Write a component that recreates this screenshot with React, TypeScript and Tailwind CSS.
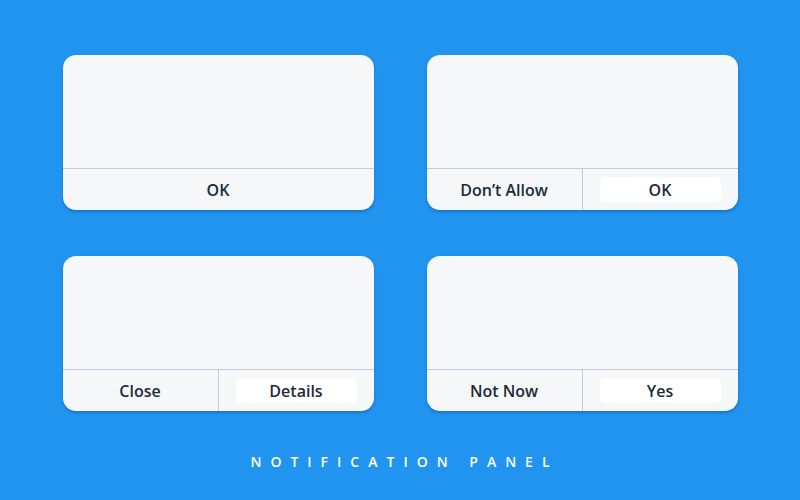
import React from 'react';

type Dialog = {
  buttons: string[];
};

const dialogs: Dialog[] = [
  { buttons: ['OK'] },
  { buttons: ["Don’t Allow", 'OK'] },
  { buttons: ['Close', 'Details'] },
  { buttons: ['Not Now', 'Yes'] },
];

const DialogCard = ({ buttons }: Dialog) => {
  return (
    <div className="w-[311px] h-[155px] bg-[#f5f7f9] rounded-[13px] shadow-[0_2px_3px_rgba(10,60,120,0.35)] flex flex-col overflow-hidden">
      <div className="h-[114px] border-b border-[#c4cbd4]"></div>
      <div className="flex-1 flex">
        {buttons.map((label, index) => {
          const primary = buttons.length > 1 && index === buttons.length - 1;
          return (
            <div
              key={label}
              className={`flex-1 flex items-center justify-center ${
                index > 0 ? 'border-l border-[#c4cbd4]' : ''
              }`}
            >
              {primary ? (
                <div className="w-[121px] h-[25px] bg-white rounded-[5px] flex items-center justify-center text-[16px] font-semibold text-[#1c2b38]">
                  {label}
                </div>
              ) : (
                <span className="text-[16px] font-semibold text-[#1c2b38]">{label}</span>
              )}
            </div>
          );
        })}
      </div>
    </div>
  );
};

const App = () => {
  return (
    <div
      className="w-[800px] h-[500px] bg-[#2194f0] flex flex-col items-center pt-[55px]"
      style={{ fontFamily: '"Open Sans", "Noto Sans", sans-serif' }}
    >
      <div className="grid grid-cols-[311px_311px] gap-x-[53px] gap-y-[46px]">
        {dialogs.map((dialog, index) => (
          <DialogCard key={index} buttons={dialog.buttons} />
        ))}
      </div>
      <div className="mt-[40px] pl-[9px] text-[14px] font-semibold tracking-[9px] text-white">
        NOTIFICATION PANEL
      </div>
    </div>
  );
};

export default App;
